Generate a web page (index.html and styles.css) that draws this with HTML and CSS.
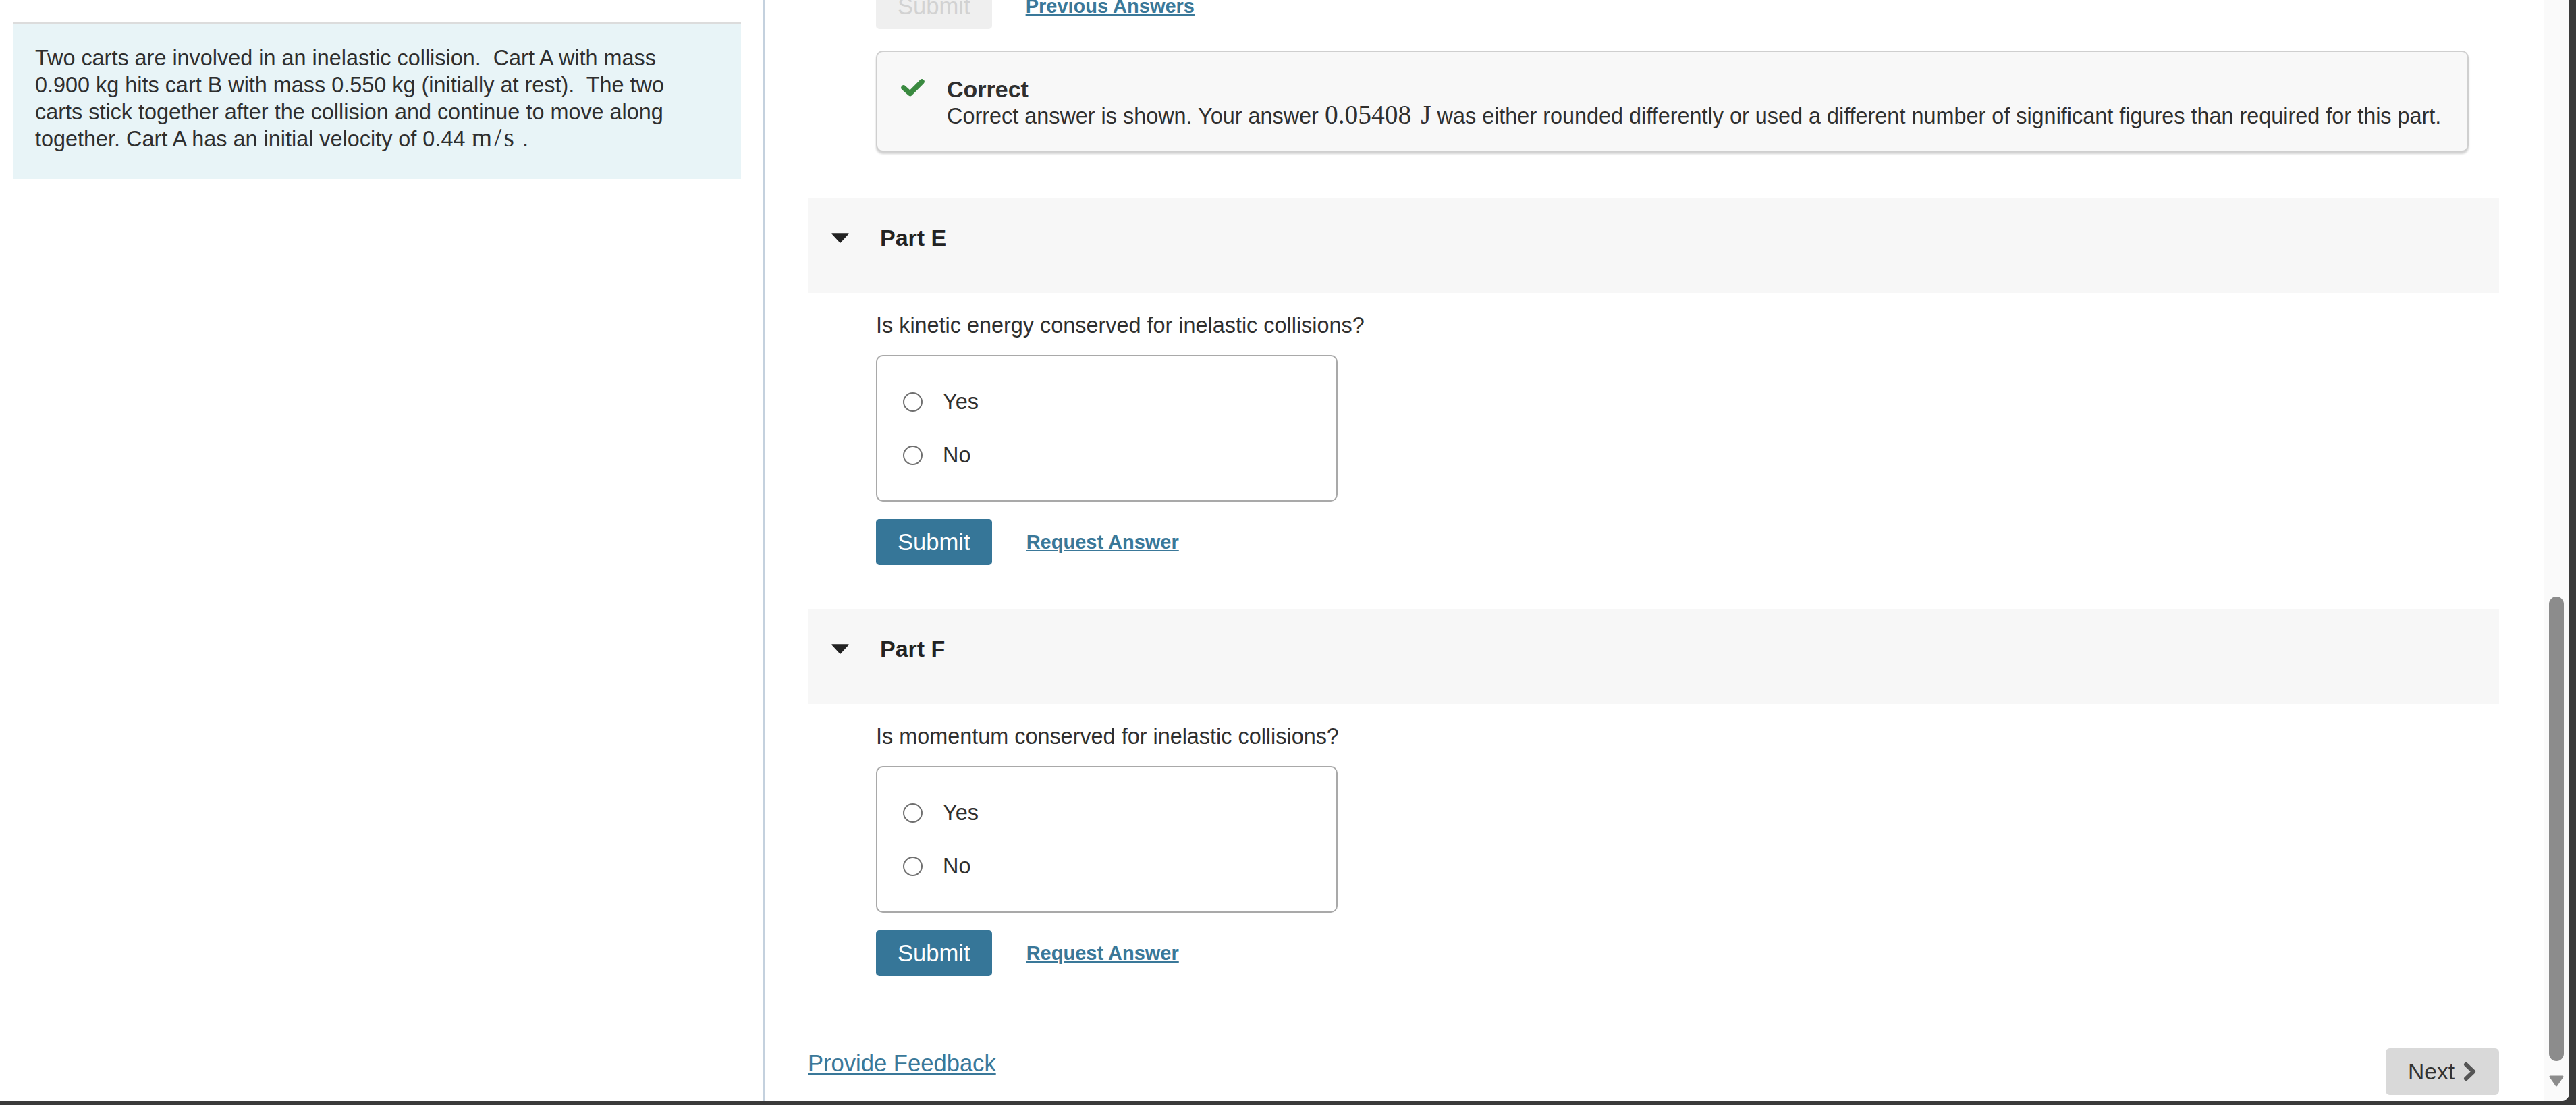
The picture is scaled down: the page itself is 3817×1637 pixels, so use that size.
FILE: index.html
```html
<!DOCTYPE html>
<html lang="en">
<head>
<meta charset="utf-8">
<title>Inelastic collision</title>
<link rel="stylesheet" href="styles.css">
</head>
<body>
<div class="viewport">
  <div class="page">
    <aside class="intro">
      <div class="intro-panel">
        <p>Two carts are involved in an inelastic collision.&nbsp; Cart A with mass 0.900 kg hits cart B with mass 0.550 kg (initially at rest).&nbsp; The two carts stick together after the collision and continue to move along together. Cart A has an initial velocity of 0.44 <span class="math math-unit">m/s</span>&nbsp;.</p>
      </div>
    </aside>

    <main class="work">
      <div class="actions prev-actions">
        <button class="btn btn-disabled" type="button">Submit</button>
        <a class="link-strong" href="#">Previous Answers</a>
      </div>

      <div class="feedback">
        <svg class="check" width="35" height="26" viewBox="0 0 35 26" aria-hidden="true">
          <polyline points="4,13 13.5,21.5 31,4" fill="none" stroke="#3a8a40" stroke-width="7.5" stroke-linecap="round" stroke-linejoin="round"/>
        </svg>
        <div class="feedback-text">
          <div class="feedback-title">Correct</div>
          <div>Correct answer is shown. Your answer <span class="math math-value">0.05408&nbsp;J</span> was either rounded differently or used a different number of significant figures than required for this part.</div>
        </div>
      </div>

      <section class="part part-first">
        <div class="part-header">
          <svg class="caret" width="26" height="15" viewBox="0 0 26 15" aria-hidden="true"><polygon points="1,1 25,1 13,14" fill="#222" stroke="#222" stroke-width="1.5" stroke-linejoin="round"/></svg>
          <span>Part E</span>
        </div>
        <div class="part-body">
          <p class="question">Is kinetic energy conserved for inelastic collisions?</p>
          <div class="choices">
            <label class="choice"><span class="radio"></span><span>Yes</span></label>
            <label class="choice"><span class="radio"></span><span>No</span></label>
          </div>
          <div class="actions">
            <button class="btn btn-primary" type="button">Submit</button>
            <a class="link-strong" href="#">Request Answer</a>
          </div>
        </div>
      </section>

      <section class="part">
        <div class="part-header">
          <svg class="caret" width="26" height="15" viewBox="0 0 26 15" aria-hidden="true"><polygon points="1,1 25,1 13,14" fill="#222" stroke="#222" stroke-width="1.5" stroke-linejoin="round"/></svg>
          <span>Part F</span>
        </div>
        <div class="part-body">
          <p class="question">Is momentum conserved for inelastic collisions?</p>
          <div class="choices">
            <label class="choice"><span class="radio"></span><span>Yes</span></label>
            <label class="choice"><span class="radio"></span><span>No</span></label>
          </div>
          <div class="actions">
            <button class="btn btn-primary" type="button">Submit</button>
            <a class="link-strong" href="#">Request Answer</a>
          </div>
        </div>
      </section>

      <footer class="footer">
        <a class="feedback-link" href="#">Provide Feedback</a>
        <button class="next-btn" type="button">Next
          <svg width="20" height="29" viewBox="0 0 20 29" aria-hidden="true"><polyline points="4,4 15,14.5 4,25" fill="none" stroke="#555" stroke-width="6" stroke-linecap="round" stroke-linejoin="round"/></svg>
        </button>
      </footer>
    </main>
  </div>

  <div class="scrollbar">
    <div class="thumb"></div>
    <svg class="scroll-arrow" width="22" height="17" viewBox="0 0 22 17" aria-hidden="true"><polygon points="2,2 20,2 11,15" fill="#8c8c8c" stroke="#8c8c8c" stroke-width="3" stroke-linejoin="round"/></svg>
  </div>
</div>
</body>
</html>
```
FILE: styles.css
```css
* { box-sizing: border-box; }

html, body {
  margin: 0;
  padding: 0;
}

body {
  width: 3817px;
  height: 1637px;
  overflow: hidden;
  background: #3a3a3a;
  font-family: "Liberation Sans", Arial, sans-serif;
  font-size: 32.4px;
  line-height: 40px;
  color: #2f2f2f;
}

.viewport {
  width: 3807px;
  height: 1631px;
  background: #fff;
  border-bottom-right-radius: 12px;
  overflow: hidden;
  display: flex;
}

.page {
  flex: 1;
  min-width: 0;
  display: flex;
}

/* left problem statement */
.intro {
  flex: none;
  width: 1134px;
  border-right: 3px solid #c4d1de;
  padding: 33px 33px 0 20px;
}

.intro-panel {
  border-top: 2px solid #dcdcdc;
  background: #e8f4f7;
  padding: 31px 76px 39px 32px;
}

.intro-panel p { margin: 0; }

.math {
  font-family: "Liberation Serif", "Times New Roman", serif;
  font-size: 1.22em;
  line-height: 34px;
}

.math-unit {
  letter-spacing: 0.08em;
}

.math-value {
  word-spacing: 0.1em;
}

/* right work area */
.work {
  flex: 1;
  min-width: 0;
  padding: 0 66px 0 63px;
  display: flex;
  flex-direction: column;
}

.actions {
  display: flex;
  align-items: center;
  gap: 51px;
  margin-top: 26px;
}

.prev-actions {
  margin-top: -25px;
  padding-left: 101px;
  gap: 50px;
}

.btn {
  height: 68px;
  padding: 0 32px;
  border: none;
  border-radius: 5px;
  font-family: inherit;
  font-size: 34.6px;
  line-height: 40px;
}

.btn-primary {
  background: #367698;
  color: #fff;
}

.btn-disabled {
  background: #efefef;
  color: #d2d2d2;
}

.link-strong {
  font-weight: bold;
  font-size: 29px;
  color: #3a7899;
  text-decoration: underline;
}

/* correct feedback box */
.feedback {
  margin: 32px 45px 0 101px;
  border: 2px solid #cfcfcf;
  border-radius: 10px;
  background: #f8f8f8;
  box-shadow: 0 3px 3px rgba(0, 0, 0, 0.18);
  padding: 35px 36px 31px 35px;
  display: flex;
  align-items: flex-start;
  gap: 33px;
}

.check {
  flex: none;
  margin-top: 5px;
}

.feedback-title {
  font-weight: bold;
  font-size: 34px;
}

/* parts */
.part { margin-top: 65px; }
.part-first { margin-top: 68px; }

.part-header {
  background: #f7f7f7;
  display: flex;
  align-items: center;
  gap: 46px;
  padding: 39px 0 62px 35px;
  font-weight: bold;
  font-size: 34px;
  color: #222;
}

.caret { flex: none; }

.part-body { padding-left: 101px; }

.question {
  margin: 28px 0 0;
}

.choices {
  margin-top: 24px;
  width: 684px;
  border: 2px solid #a9a9a9;
  border-radius: 10px;
  padding: 47px 38px;
  display: flex;
  flex-direction: column;
  gap: 39px;
}

.choice {
  display: flex;
  align-items: center;
  gap: 30px;
  height: 40px;
}

.radio {
  flex: none;
  width: 29px;
  height: 29px;
  border: 2px solid #707070;
  border-radius: 50%;
  background: #fff;
}

/* footer */
.footer {
  margin-top: 107px;
  display: flex;
  justify-content: space-between;
  align-items: flex-start;
}

.feedback-link {
  margin-top: 2px;
  font-size: 34.6px;
  color: #3a7899;
  text-decoration: underline;
}

.next-btn {
  height: 69px;
  width: 168px;
  padding: 0 0 0 33px;
  border: none;
  border-radius: 6px;
  background: #d9d9d9;
  color: #333;
  font-family: inherit;
  font-size: 33.6px;
  display: flex;
  align-items: center;
  gap: 13px;
}

/* scrollbar */
.scrollbar {
  flex: none;
  width: 38px;
  background: #fafafa;
  display: flex;
  flex-direction: column;
  align-items: center;
  padding-top: 884px;
}

.thumb {
  width: 22px;
  height: 688px;
  border-radius: 11px;
  background: #8c8c8c;
}

.scroll-arrow {
  margin-top: 21px;
}
```
